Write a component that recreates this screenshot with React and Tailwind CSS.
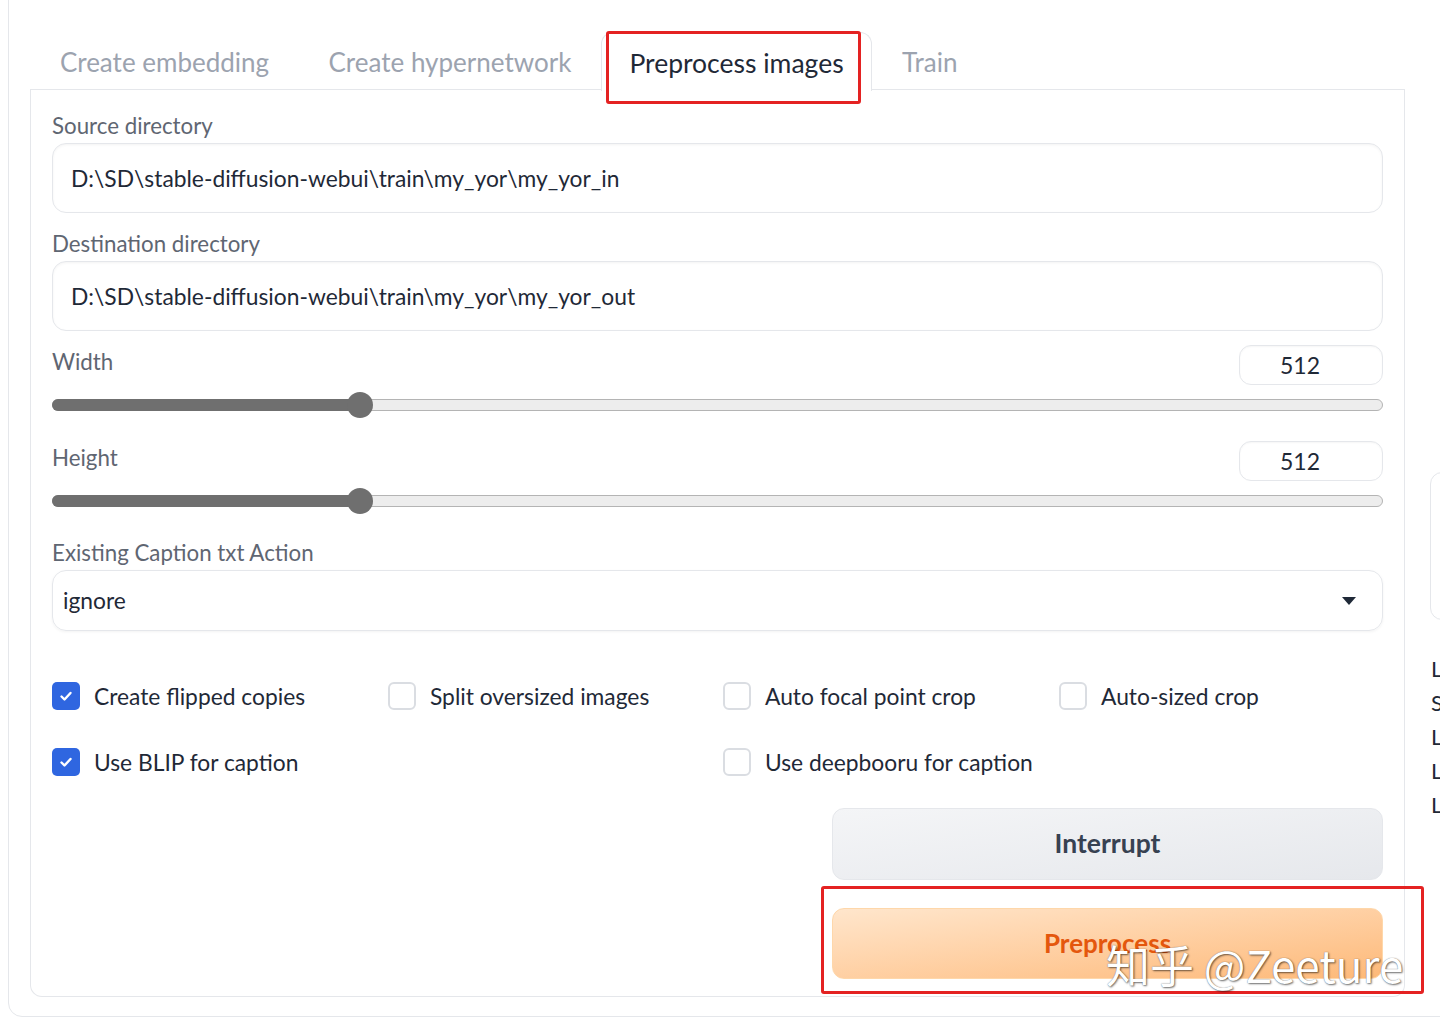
import React from "react";

const Label = ({ children, className = "" }) => (
  <div className={`text-[22.3px] leading-[30px] text-[#5f6672] ${className}`}>{children}</div>
);

const TextBox = ({ value }) => (
  <div className="h-[70px] rounded-[14px] border border-[#e5e7eb] shadow-[inset_0_1px_3px_rgba(0,0,0,0.05)] flex items-center pl-[18px] text-[22.8px] text-[#1f2937]">
    {value}
  </div>
);

const NumberBox = ({ value }) => (
  <div className="w-[144px] h-[40px] rounded-[12px] border border-[#e5e7eb] shadow-[inset_0_1px_2px_rgba(0,0,0,0.04)] flex items-center pl-[40px] text-[23px] text-[#1f2937]">
    {value}
  </div>
);

const Slider = () => (
  <div className="relative h-[26px]">
    <div className="absolute left-0 right-0 top-[7px] h-[12px] rounded-full bg-[#ededed] border border-[#b4b4b4]" />
    <div className="absolute left-0 top-[7px] w-[308px] h-[12px] rounded-full bg-[#6f6f6f]" />
    <div className="absolute left-[295px] top-0 w-[26px] h-[26px] rounded-full bg-[#6f6f6f]" />
  </div>
);

const Check = ({ checked, label, width = "w-[336px]" }) => (
  <div className={`${width} shrink-0 flex items-center gap-[14px]`}>
    {checked ? (
      <div className="w-[28px] h-[28px] rounded-[5px] bg-[#2f66e0] flex items-center justify-center">
        <svg viewBox="0 0 16 16" className="w-[16px] h-[16px]">
          <path d="M3.5 8.5l3 3 6-6.5" fill="none" stroke="white" strokeWidth="2.4" strokeLinecap="round" strokeLinejoin="round" />
        </svg>
      </div>
    ) : (
      <div className="w-[28px] h-[28px] rounded-[6px] border-2 border-[#dadde2] bg-white" />
    )}
    <span className="text-[22.8px] text-[#1f2937]">{label}</span>
  </div>
);

export default function App() {
  return (
    <div className="relative w-[1440px] h-[1025px] overflow-hidden bg-white font-['Lato',sans-serif]">
      <div className="ml-[8px] mt-[-40px] w-[1700px] h-[1057px] border border-[#e5e7eb] rounded-b-[14px] flex pl-[21px] pt-[71px]">
        {/* left column */}
        <div className="w-[1375px] flex flex-col">
          {/* tabs */}
          <div className="h-[58px] flex border-b border-[#e5e7eb] text-[26px]">
            <div className="w-[269px] flex items-center justify-center pt-[4px] text-[#9ca3af]">Create embedding</div>
            <div className="w-[302px] flex items-center justify-center pt-[4px] text-[#9ca3af]">Create hypernetwork</div>
            <div className="w-[271px] h-[59px] -mb-px flex items-center justify-center pt-[4px] bg-white border-x border-t border-[#e5e7eb] rounded-t-[12px] text-[26.5px] text-[#1f2937]">
              Preprocess images
            </div>
            <div className="flex items-center pl-[30px] pt-[4px] text-[#9ca3af]">Train</div>
          </div>

          {/* panel */}
          <div className="h-[907px] border-x border-b border-[#e5e7eb] rounded-b-[12px] px-[21px] pt-[21px] flex flex-col">
            <Label>Source directory</Label>
            <div className="mt-[2px]">
              <TextBox value="D:\SD\stable-diffusion-webui\train\my_yor\my_yor_in" />
            </div>

            <Label className="mt-[16px]">Destination directory</Label>
            <div className="mt-[2px]">
              <TextBox value="D:\SD\stable-diffusion-webui\train\my_yor\my_yor_out" />
            </div>

            <div className="mt-[14px] flex justify-between items-start">
              <Label className="mt-[2px]">Width</Label>
              <NumberBox value="512" />
            </div>
            <div className="mt-[7px]">
              <Slider />
            </div>

            <div className="mt-[23px] flex justify-between items-start">
              <Label className="mt-[2px]">Height</Label>
              <NumberBox value="512" />
            </div>
            <div className="mt-[7px]">
              <Slider />
            </div>

            <Label className="mt-[24px]">Existing Caption txt Action</Label>
            <div className="mt-[2px] h-[61px] rounded-[14px] border border-[#e5e7eb] shadow-[0_1px_3px_rgba(0,0,0,0.05)] flex items-center justify-between pl-[10px] pr-[26px] text-[22.8px] text-[#1f2937]">
              <span>ignore</span>
              <svg viewBox="0 0 14 8" className="w-[14px] h-[8px]">
                <path d="M0 0h14L7 8z" fill="#1f2937" />
              </svg>
            </div>

            <div className="mt-[47px] h-[36px] flex items-center">
              <Check checked label="Create flipped copies" />
              <Check label="Split oversized images" width="w-[335px]" />
              <Check label="Auto focal point crop" />
              <Check label="Auto-sized crop" width="w-[320px]" />
            </div>
            <div className="mt-[30px] h-[36px] flex items-center">
              <Check checked label="Use BLIP for caption" />
              <div className="w-[335px] shrink-0" />
              <Check label="Use deepbooru for caption" />
            </div>

            <div className="mt-[28px] flex justify-end">
              <div className="w-[551px] h-[72px] rounded-[12px] border border-[#e5e7eb] bg-gradient-to-br from-[#f4f5f7] to-[#e6e8ec] flex items-center justify-center text-[26.5px] font-bold text-[#374151]">
                Interrupt
              </div>
            </div>
            <div className="mt-[28px] flex justify-end">
              <div className="w-[551px] h-[71px] rounded-[12px] border border-[#fed7aa] bg-gradient-to-br from-[#ffe6cc] to-[#fdb978] flex items-center justify-center text-[26px] font-bold text-[#e4570d]">
                Preprocess
              </div>
            </div>
          </div>
        </div>

        {/* right column (cut off) */}
        <div className="ml-[20px] w-[200px] flex flex-col">
          <div className="ml-[5px] mt-[440px] h-[148px] border border-[#e5e7eb] rounded-[12px]" />
          <div className="ml-[6px] mt-[32px] flex flex-col text-[22px] leading-[34px] text-[#1f2937]">
            <span>Loss</span>
            <span>Step</span>
            <span>Last</span>
            <span>Last</span>
            <span>Last</span>
          </div>
        </div>
      </div>

      {/* annotation boxes */}
      <div className="absolute left-[606px] top-[31px] w-[255px] h-[73px] border-[3px] border-[#e42222] rounded-[3px]" />
      <div className="absolute left-[821px] top-[886px] w-[603px] h-[108px] border-[3px] border-[#e42222] rounded-[3px]" />

      {/* watermark */}
      <div className="absolute left-[1106px] top-[936px] text-[44px] leading-[56px] text-white font-['Noto_Sans_CJK_SC',sans-serif] [text-shadow:1px_1px_2px_rgba(0,0,0,0.55),0_0_1px_rgba(0,0,0,0.5)] whitespace-nowrap">
        知乎 @Zeeture
      </div>
    </div>
  );
}
